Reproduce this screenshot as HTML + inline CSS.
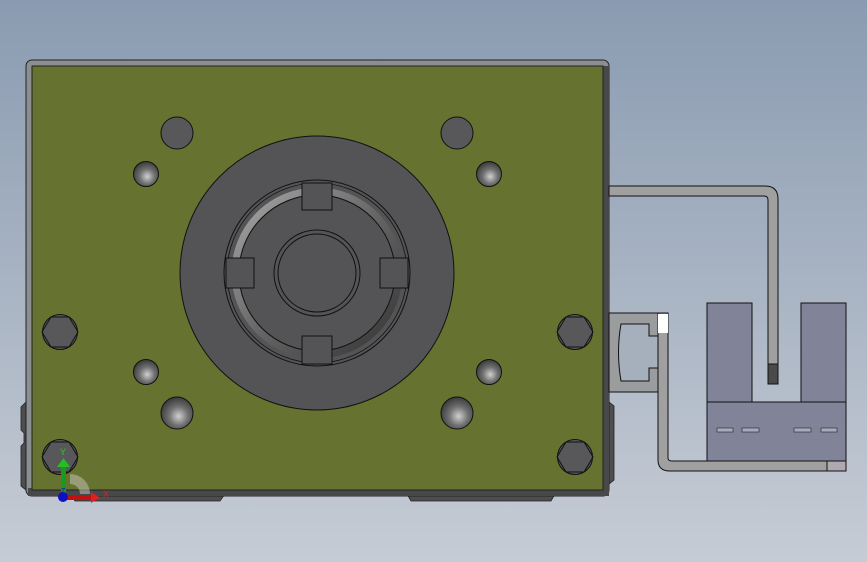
<!DOCTYPE html>
<html><head><meta charset="utf-8"><style>
html,body{margin:0;padding:0;width:867px;height:562px;overflow:hidden}
</style></head><body>
<svg width="867" height="562" viewBox="0 0 867 562" xmlns="http://www.w3.org/2000/svg">
<defs>
<linearGradient id="bg" x1="0" y1="0" x2="0" y2="1">
<stop offset="0" stop-color="#8a9bb1"/><stop offset="1" stop-color="#c6ccd5"/></linearGradient>
<radialGradient id="cs" cx="0.55" cy="0.6" r="0.6">
<stop offset="0" stop-color="#d0d0d0"/><stop offset="0.5" stop-color="#707070"/><stop offset="1" stop-color="#3a3a3a"/></radialGradient>
<linearGradient id="ring" x1="0" y1="0" x2="1" y2="1">
<stop offset="0" stop-color="#a8a8a8"/><stop offset="0.5" stop-color="#666"/><stop offset="1" stop-color="#333"/></linearGradient>
</defs>
<rect width="867" height="562" fill="url(#bg)"/>
<path d="M70 494 L225 494 L220 501 L75 501 Z" fill="#4e4e50" stroke="#222" stroke-width="0.8"/>
<path d="M407 494 L555 494 L551 501 L411 501 Z" fill="#4e4e50" stroke="#222" stroke-width="0.8"/>
<path d="M26 402 L21 407 L21 430 L24 433 L24 443 L21 446 L21 486 L26 490 Z" fill="#4e4e50" stroke="#222" stroke-width="0.8"/>
<path d="M609 402 L614 406 L614 480 L609 484 Z" fill="#4e4e50" stroke="#222" stroke-width="0.8"/>
<rect x="26" y="60" width="583" height="436" rx="6" fill="#8c8f92" stroke="#222" stroke-width="1"/>
<rect x="28" y="488" width="581" height="8" fill="#48484a"/>
<rect x="603" y="66" width="6" height="428" fill="#48484a"/>
<rect x="32" y="66" width="571" height="424" fill="#66722f" stroke="#222" stroke-width="1"/>
<circle cx="177" cy="133" r="16" fill="#58585a" stroke="#111"/>
<circle cx="457" cy="133" r="16" fill="#58585a" stroke="#111"/>
<circle cx="146" cy="174" r="12.5" fill="url(#cs)" stroke="#111"/>
<circle cx="489" cy="174" r="12.5" fill="url(#cs)" stroke="#111"/>
<circle cx="146" cy="372" r="12.5" fill="url(#cs)" stroke="#111"/>
<circle cx="489" cy="372" r="12.5" fill="url(#cs)" stroke="#111"/>
<circle cx="177" cy="413" r="16" fill="url(#cs)" stroke="#111"/>
<circle cx="457" cy="413" r="16" fill="url(#cs)" stroke="#111"/>
<g fill="#58585a" stroke="#111">
<circle cx="60" cy="332" r="17.5"/><path d="M51 317 L69 317 L78 332 L69 347 L51 347 L42 332 Z" fill="none"/>
<circle cx="575" cy="332" r="17.5"/><path d="M566 317 L584 317 L593 332 L584 347 L566 347 L557 332 Z" fill="none"/>
<circle cx="60" cy="457" r="17.5"/><path d="M51 442 L69 442 L78 457 L69 472 L51 472 L42 457 Z" fill="none"/>
<circle cx="575" cy="457" r="17.5"/><path d="M566 442 L584 442 L593 457 L584 472 L566 472 L557 457 Z" fill="none"/>
</g>
<circle cx="317" cy="273" r="137" fill="#545456" stroke="#111"/>
<circle cx="317" cy="273" r="93" fill="#545456" stroke="#111"/>
<circle cx="317" cy="273" r="90" fill="none" stroke="#111" stroke-width="0.8"/>
<circle cx="317" cy="273" r="82" fill="none" stroke="url(#ring)" stroke-width="7"/>
<circle cx="317" cy="273" r="78" fill="#545456" stroke="#111"/>
<g fill="#545456" stroke="#111">
<rect x="302" y="183" width="30" height="27"/>
<rect x="302" y="336" width="30" height="28"/>
<rect x="226" y="258" width="28" height="30"/>
<rect x="380" y="258" width="28" height="30"/>
</g>
<circle cx="317" cy="273" r="43" fill="none" stroke="#111"/>
<circle cx="317" cy="273" r="39" fill="none" stroke="#111"/>
<path d="M609 186 L765 186 Q778 186 778 199 L778 384 L768 384 L768 200 Q768 196 764 196 L609 196 Z" fill="#a0a0a0" stroke="#111"/>
<rect x="768" y="364" width="10" height="20" fill="#4a4a4a" stroke="#111"/>
<path d="M609 313 L658 313 L658 392 L609 392 Z" fill="#9a9c9e" stroke="#111"/>
<path d="M621 324 L649 324 L649 336 L658 336 L658 368 L649 368 L649 381 L621 381 Q616 352 621 324 Z" fill="#a6b0bd" stroke="#111"/>
<path d="M658 313 L668 313 L668 458 Q668 461 672 461 L846 461 L846 471 L670 471 Q658 471 658 460 Z" fill="#a0a0a0" stroke="#111"/>
<rect x="658" y="314" width="10" height="19" fill="#fff"/>
<g fill="#818399" stroke="#111">
<rect x="707" y="303" width="45" height="99"/>
<rect x="801" y="303" width="45" height="99"/>
<rect x="707" y="402" width="139" height="59"/>
</g>
<rect x="827" y="461" width="19" height="10" fill="#b0a8b0" stroke="#111"/>
<g fill="#a8abc0" stroke="#222" stroke-width="0.6">
<rect x="717" y="428" width="16" height="4"/><rect x="742" y="428" width="17" height="4"/>
<rect x="794" y="428" width="17" height="4"/><rect x="821" y="428" width="16" height="4"/>
</g>
<path d="M70 474 A20 20 0 0 1 90 494 L80 494 A10 10 0 0 0 70 484 Z" fill="#c8c8c0" opacity="0.5"/>
<rect x="61" y="466" width="5" height="28" fill="#1a9a1a"/>
<path d="M57 467 L63.5 458 L70 467 Z" fill="#22c022"/>
<rect x="64" y="495" width="28" height="5" fill="#c01010"/>
<path d="M91 492 L100 497.5 L91 503 Z" fill="#e02020"/>
<circle cx="63" cy="497" r="5" fill="#1010c0"/>
<text x="60" y="455" font-family="Liberation Sans, sans-serif" font-size="9" fill="#22d022">Y</text>
<text x="103" y="497" font-family="Liberation Sans, sans-serif" font-size="9" fill="#e02020">X</text>
<text x="61" y="493" font-family="Liberation Sans, sans-serif" font-size="7" fill="#1010c0">Z</text>
</svg>
</body></html>
